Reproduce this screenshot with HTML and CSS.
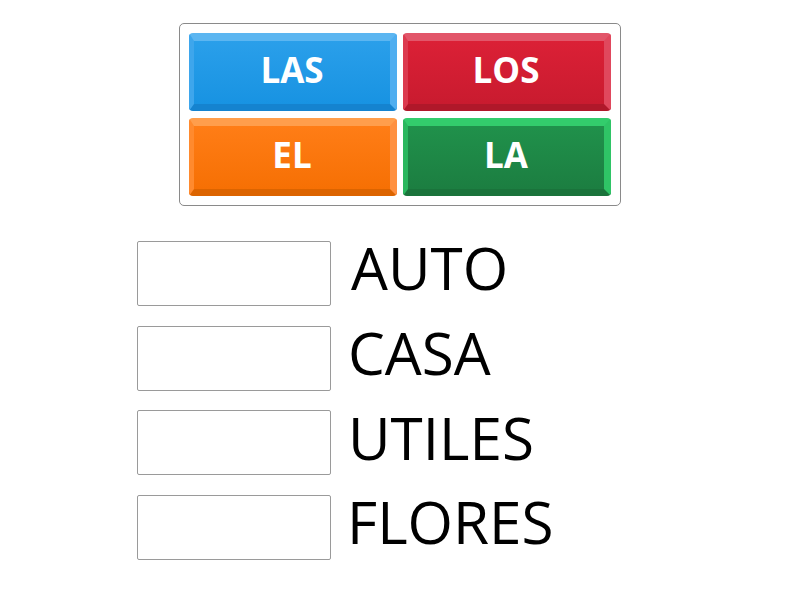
FILE: index.html
```html
<!DOCTYPE html>
<html>
<head>
<meta charset="utf-8">
<link rel="stylesheet" href="styles.css">
</head>
<body>
<div class="page">
  <div class="bank">
    <div class="tile tile-blue">LAS</div>
    <div class="tile tile-red">LOS</div>
    <div class="tile tile-orange">EL</div>
    <div class="tile tile-green">LA</div>
  </div>
  <div class="rows">
    <div class="row"><div class="slot"></div><div class="word word-a">AUTO</div></div>
    <div class="row"><div class="slot"></div><div class="word">CASA</div></div>
    <div class="row"><div class="slot"></div><div class="word">UTILES</div></div>
    <div class="row"><div class="slot"></div><div class="word word-f">FLORES</div></div>
  </div>
</div>
</body>
</html>
```
FILE: styles.css
```css
html, body {
  margin: 0;
  padding: 0;
  background: #fff;
}
body {
  font-family: "Open Sans", "Liberation Sans", sans-serif;
  width: 800px;
  height: 600px;
  overflow: hidden;
}
.page {
  padding-top: 23px;
}
.bank {
  box-sizing: border-box;
  width: 442px;
  height: 183px;
  margin: 0 auto;
  border: 1px solid #8a8a8a;
  border-radius: 5px;
  padding: 9px 9px 8px 9px;
  display: grid;
  grid-template-columns: 208px 208px;
  grid-template-rows: 78px 78px;
  column-gap: 6px;
  row-gap: 7px;
}
.tile {
  box-sizing: border-box;
  border-radius: 4px;
  border-style: solid;
  border-width: 8px 7px 7px 5px;
  color: #fff;
  font-weight: 700;
  font-size: 35px;
  display: flex;
  align-items: center;
  justify-content: center;
  padding-bottom: 6px;
}
.tile-blue {
  background: linear-gradient(#2a9fea, #1893e2);
  border-color: #5cb6f1 #4eaef0 #1583cf #3ea6ec;
}
.tile-red {
  background: linear-gradient(#db2036, #c91b2f);
  border-color: #e2566a #e0485d #b0182a #dc3a4f;
}
.tile-orange {
  background: linear-gradient(#ff7d16, #f67004);
  border-color: #ff9e4c #ff9040 #dc6400 #ff8a2e;
}
.tile-green {
  background: linear-gradient(#20914b, #1c7e41);
  border-color: #33cc6c #2fc466 #1a733b #2ab75e;
}
.rows {
  margin-top: 35px;
  margin-left: 137px;
  display: flex;
  flex-direction: column;
  row-gap: 19.67px;
}
.row {
  display: flex;
  align-items: center;
  height: 65px;
}
.slot {
  box-sizing: border-box;
  width: 194px;
  height: 65px;
  border: 1px solid #9a9a9a;
  border-radius: 2px;
  flex-shrink: 0;
}
.word {
  margin-left: 17px;
  font-size: 58.4px;
  line-height: 1;
  color: #000;
  padding-bottom: 10px;
}
.word-a {
  margin-left: 20px;
}
.word-f {
  margin-left: 16px;
}
```
